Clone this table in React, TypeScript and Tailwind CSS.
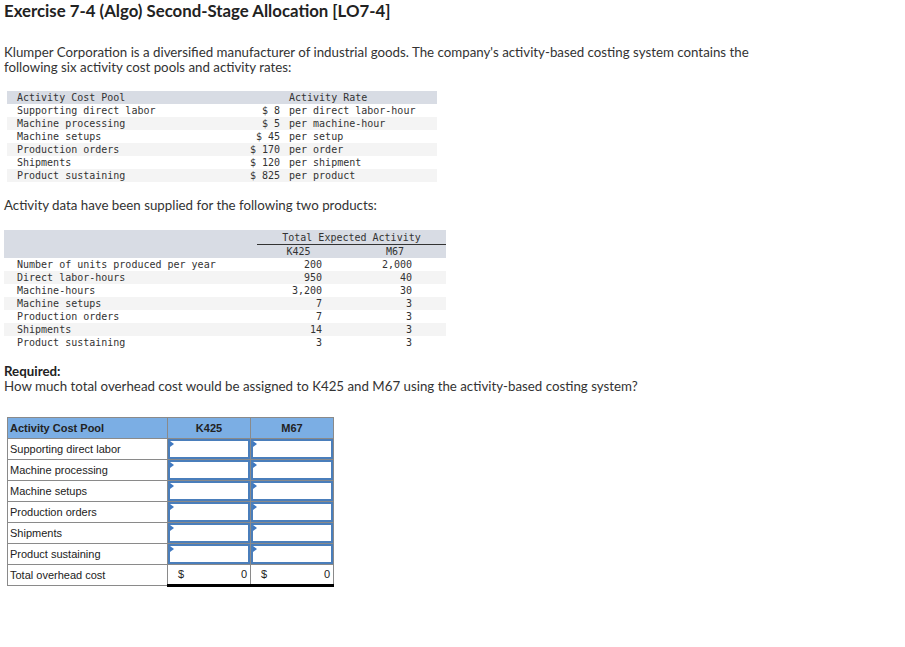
import React from "react";

const rates = [
  ["Supporting direct labor", "$ 8", "per direct labor-hour"],
  ["Machine processing", "$ 5", "per machine-hour"],
  ["Machine setups", "$ 45", "per setup"],
  ["Production orders", "$ 170", "per order"],
  ["Shipments", "$ 120", "per shipment"],
  ["Product sustaining", "$ 825", "per product"],
];

const activity = [
  ["Number of units produced per year", "200", "2,000"],
  ["Direct labor-hours", "950", "40"],
  ["Machine-hours", "3,200", "30"],
  ["Machine setups", "7", "3"],
  ["Production orders", "7", "3"],
  ["Shipments", "14", "3"],
  ["Product sustaining", "3", "3"],
];

const pools = [
  "Supporting direct labor",
  "Machine processing",
  "Machine setups",
  "Production orders",
  "Shipments",
  "Product sustaining",
];

const mono = "font-['DejaVu_Sans_Mono','Liberation_Mono',monospace] text-[10px] leading-[13px] text-[#333] table-fixed";

function InputCell() {
  return (
    <td className="border border-[#8a8a8a] p-0">
      <div className="relative h-[20px] border-2 border-[#4a7ebb] bg-white">
        <span className="absolute left-0 top-0 w-0 h-0 border-t-[3px] border-b-[3px] border-l-[4px] border-t-transparent border-b-transparent border-l-[#3f78c0]" />
      </div>
    </td>
  );
}

export default function App() {
  return (
    <div className="w-[905px] h-[647px] bg-white font-['Lato','Open_Sans',sans-serif] text-[#333] pl-[4px]">
      <h1 className="pt-[1px] text-[16.8px] leading-[20px] font-bold text-[#222]">
        Exercise 7-4 (Algo) Second-Stage Allocation [LO7-4]
      </h1>
      <p className="mt-[24px] text-[13.3px] leading-[15px] w-[770px]">
        Klumper Corporation is a diversified manufacturer of industrial goods. The company's activity-based costing system contains the following six activity cost pools and activity rates:
      </p>

      <table className={`mt-[16px] ml-[3px] w-[430px] border-collapse ${mono}`}>
        <colgroup>
          <col className="w-[190px]" />
          <col className="w-[83px]" />
          <col />
        </colgroup>
        <thead>
          <tr className="bg-[#d8dce4]">
            <th className="pl-[10px] text-left font-normal">Activity Cost Pool</th>
            <th />
            <th className="pl-[9px] text-left font-normal">Activity Rate</th>
          </tr>
        </thead>
        <tbody>
          {rates.map((r, i) => (
            <tr key={r[0]} className={i % 2 === 1 ? "bg-[#f4f4f4]" : ""}>
              <td className="pl-[10px]">{r[0]}</td>
              <td className="text-right">{r[1]}</td>
              <td className="pl-[9px]">{r[2]}</td>
            </tr>
          ))}
        </tbody>
      </table>

      <p className="mt-[16px] text-[13.3px] leading-[15px]">
        Activity data have been supplied for the following two products:
      </p>

      <table className={`mt-[17px] w-[442px] border-collapse ${mono}`}>
        <colgroup>
          <col className="w-[253px]" />
          <col className="w-[93px]" />
          <col />
        </colgroup>
        <thead>
          <tr className="bg-[#d8dce4] h-[14px]">
            <th />
            <th colSpan={2} className="font-normal text-center pt-[1px] border-b border-[#333]">Total Expected Activity</th>
          </tr>
          <tr className="bg-[#d8dce4] h-[13px]">
            <th />
            <th className="font-normal text-center pr-[10px]">K425</th>
            <th className="font-normal text-center pr-[6px]">M67</th>
          </tr>
        </thead>
        <tbody>
          {activity.map((r, i) => (
            <tr key={r[0]} className={i % 2 === 1 ? "bg-[#f4f4f4]" : ""}>
              <td className="pl-[13px] whitespace-nowrap">{r[0]}</td>
              <td className="text-right pr-[28px]">{r[1]}</td>
              <td className="text-right pr-[34px]">{r[2]}</td>
            </tr>
          ))}
        </tbody>
      </table>

      <div className="mt-[15px] text-[13.3px] leading-[15px]">
        <div className="font-bold text-[#222]">Required:</div>
        <div>How much total overhead cost would be assigned to K425 and M67 using the activity-based costing system?</div>
      </div>

      <table className="mt-[23px] ml-[3px] border-collapse table-fixed w-[327px] font-['Liberation_Sans',Arial,sans-serif] text-[11px] text-[#222]">
        <colgroup>
          <col className="w-[160px]" />
          <col className="w-[83px]" />
          <col className="w-[83px]" />
        </colgroup>
        <thead>
          <tr className="bg-[#7baee4] h-[21px]">
            <th className="border border-[#8a8a8a] text-left pl-[2px] font-bold">Activity Cost Pool</th>
            <th className="border border-[#8a8a8a] text-center font-bold">K425</th>
            <th className="border border-[#8a8a8a] text-center font-bold">M67</th>
          </tr>
        </thead>
        <tbody>
          {pools.map((p) => (
            <tr key={p}>
              <td className="border border-[#8a8a8a] pl-[2px]">{p}</td>
              <InputCell />
              <InputCell />
            </tr>
          ))}
          <tr className="h-[21px]">
            <td className="border border-[#8a8a8a] pl-[2px]">Total overhead cost</td>
            <td className="border border-[#8a8a8a] border-b-[3px] border-b-black px-[3px]">
              <div className="flex justify-between pl-[7px]"><span>$</span><span>0</span></div>
            </td>
            <td className="border border-[#8a8a8a] border-b-[3px] border-b-black px-[3px]">
              <div className="flex justify-between pl-[7px]"><span>$</span><span>0</span></div>
            </td>
          </tr>
        </tbody>
      </table>
    </div>
  );
}
